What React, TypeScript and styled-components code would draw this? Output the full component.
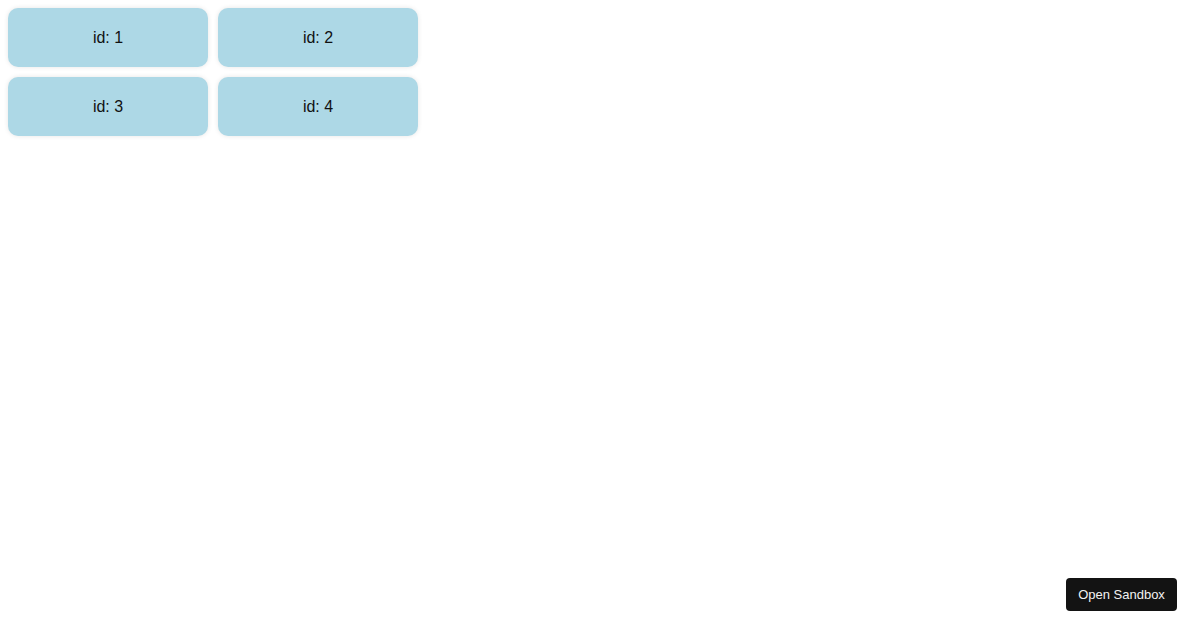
import React from "react";
import styled, { createGlobalStyle } from "styled-components";

const Global = createGlobalStyle`
  html, body { margin: 0; padding: 0; background: #fff; }
  body { font-family: "Liberation Sans", Arial, sans-serif; }
`;

const Page = styled.div`
  padding: 8px;
  height: 630px;
  box-sizing: border-box;
  position: relative;
`;

const Grid = styled.div`
  display: grid;
  grid-template-columns: repeat(2, 200px);
  grid-auto-rows: 59px;
  gap: 10px;
`;

const Card = styled.div`
  background: #add8e6;
  border-radius: 10px;
  box-shadow: 0 0 5px rgba(0, 0, 0, 0.1);
  display: flex;
  align-items: center;
  justify-content: center;
  font-size: 16px;
  color: #111;
`;

const SandboxButton = styled.button`
  position: absolute;
  right: 23px;
  bottom: 19px;
  width: 111px;
  height: 33px;
  padding: 0;
  border: none;
  border-radius: 4px;
  background: #131313;
  color: #f2f2f2;
  font-family: "Liberation Sans", Arial, sans-serif;
  font-size: 13px;
  cursor: pointer;
`;

export default function App() {
  const items = [1, 2, 3, 4];
  return (
    <>
      <Global />
      <Page>
        <Grid>
          {items.map((id) => (
            <Card key={id}>id: {id}</Card>
          ))}
        </Grid>
        <SandboxButton>Open Sandbox</SandboxButton>
      </Page>
    </>
  );
}
